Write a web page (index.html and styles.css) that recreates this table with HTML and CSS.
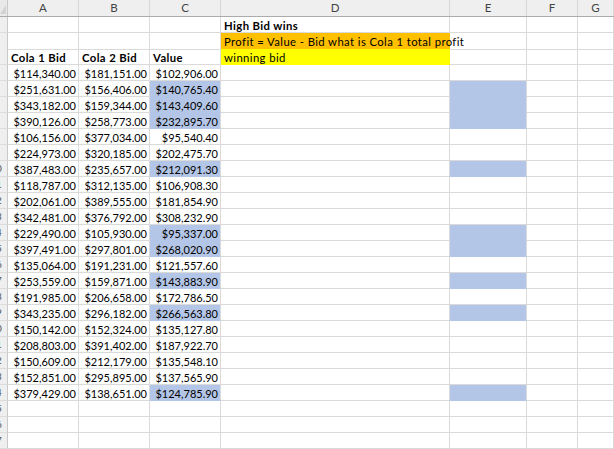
FILE: index.html
```html
<!DOCTYPE html>
<html>
<head>
<meta charset="utf-8">
<link rel="stylesheet" href="styles.css">
</head>
<body>
<div class="sheet">
  <div class="row head">
    <div class="corner"><i></i></div>
    <div class="ch">A</div><div class="ch">B</div><div class="ch">C</div><div class="ch">D</div><div class="ch">E</div><div class="ch">F</div><div class="ch">G</div>
  </div>
  <div class="row"><div class="rh"><span>1</span></div><div class="c"></div><div class="c"></div><div class="c"></div><div class="c t b">High Bid wins</div><div class="c"></div><div class="c"></div><div class="c"></div></div>
  <div class="row"><div class="rh"><span>2</span></div><div class="c"></div><div class="c"></div><div class="c"></div><div class="c t or ov">Profit = Value - Bid what is Cola 1 total profit</div><div class="c"></div><div class="c"></div><div class="c"></div></div>
  <div class="row"><div class="rh"><span>3</span></div><div class="c t b">Cola 1 Bid</div><div class="c t b">Cola 2 Bid</div><div class="c t b">Value</div><div class="c t ye">winning bid</div><div class="c"></div><div class="c"></div><div class="c"></div></div>
  <div class="row"><div class="rh"><span>4</span></div><div class="c n">$114,340.00</div><div class="c n">$181,151.00</div><div class="c n">$102,906.00</div><div class="c"></div><div class="c"></div><div class="c"></div><div class="c"></div></div>
  <div class="row"><div class="rh"><span>5</span></div><div class="c n">$251,631.00</div><div class="c n">$156,406.00</div><div class="c n hl">$140,765.40</div><div class="c"></div><div class="c hl"></div><div class="c"></div><div class="c"></div></div>
  <div class="row"><div class="rh"><span>6</span></div><div class="c n">$343,182.00</div><div class="c n">$159,344.00</div><div class="c n hl">$143,409.60</div><div class="c"></div><div class="c hl"></div><div class="c"></div><div class="c"></div></div>
  <div class="row"><div class="rh"><span>7</span></div><div class="c n">$390,126.00</div><div class="c n">$258,773.00</div><div class="c n hl">$232,895.70</div><div class="c"></div><div class="c hl"></div><div class="c"></div><div class="c"></div></div>
  <div class="row"><div class="rh"><span>8</span></div><div class="c n">$106,156.00</div><div class="c n">$377,034.00</div><div class="c n">$95,540.40</div><div class="c"></div><div class="c"></div><div class="c"></div><div class="c"></div></div>
  <div class="row"><div class="rh"><span>9</span></div><div class="c n">$224,973.00</div><div class="c n">$320,185.00</div><div class="c n">$202,475.70</div><div class="c"></div><div class="c"></div><div class="c"></div><div class="c"></div></div>
  <div class="row"><div class="rh"><span>10</span></div><div class="c n">$387,483.00</div><div class="c n">$235,657.00</div><div class="c n hl">$212,091.30</div><div class="c"></div><div class="c hl"></div><div class="c"></div><div class="c"></div></div>
  <div class="row"><div class="rh"><span>11</span></div><div class="c n">$118,787.00</div><div class="c n">$312,135.00</div><div class="c n">$106,908.30</div><div class="c"></div><div class="c"></div><div class="c"></div><div class="c"></div></div>
  <div class="row"><div class="rh"><span>12</span></div><div class="c n">$202,061.00</div><div class="c n">$389,555.00</div><div class="c n">$181,854.90</div><div class="c"></div><div class="c"></div><div class="c"></div><div class="c"></div></div>
  <div class="row"><div class="rh"><span>13</span></div><div class="c n">$342,481.00</div><div class="c n">$376,792.00</div><div class="c n">$308,232.90</div><div class="c"></div><div class="c"></div><div class="c"></div><div class="c"></div></div>
  <div class="row"><div class="rh"><span>14</span></div><div class="c n">$229,490.00</div><div class="c n">$105,930.00</div><div class="c n hl">$95,337.00</div><div class="c"></div><div class="c hl"></div><div class="c"></div><div class="c"></div></div>
  <div class="row"><div class="rh"><span>15</span></div><div class="c n">$397,491.00</div><div class="c n">$297,801.00</div><div class="c n hl">$268,020.90</div><div class="c"></div><div class="c hl"></div><div class="c"></div><div class="c"></div></div>
  <div class="row"><div class="rh"><span>16</span></div><div class="c n">$135,064.00</div><div class="c n">$191,231.00</div><div class="c n">$121,557.60</div><div class="c"></div><div class="c"></div><div class="c"></div><div class="c"></div></div>
  <div class="row"><div class="rh"><span>17</span></div><div class="c n">$253,559.00</div><div class="c n">$159,871.00</div><div class="c n hl">$143,883.90</div><div class="c"></div><div class="c hl"></div><div class="c"></div><div class="c"></div></div>
  <div class="row"><div class="rh"><span>18</span></div><div class="c n">$191,985.00</div><div class="c n">$206,658.00</div><div class="c n">$172,786.50</div><div class="c"></div><div class="c"></div><div class="c"></div><div class="c"></div></div>
  <div class="row"><div class="rh"><span>19</span></div><div class="c n">$343,235.00</div><div class="c n">$296,182.00</div><div class="c n hl">$266,563.80</div><div class="c"></div><div class="c hl"></div><div class="c"></div><div class="c"></div></div>
  <div class="row"><div class="rh"><span>20</span></div><div class="c n">$150,142.00</div><div class="c n">$152,324.00</div><div class="c n">$135,127.80</div><div class="c"></div><div class="c"></div><div class="c"></div><div class="c"></div></div>
  <div class="row"><div class="rh"><span>21</span></div><div class="c n">$208,803.00</div><div class="c n">$391,402.00</div><div class="c n">$187,922.70</div><div class="c"></div><div class="c"></div><div class="c"></div><div class="c"></div></div>
  <div class="row"><div class="rh"><span>22</span></div><div class="c n">$150,609.00</div><div class="c n">$212,179.00</div><div class="c n">$135,548.10</div><div class="c"></div><div class="c"></div><div class="c"></div><div class="c"></div></div>
  <div class="row"><div class="rh"><span>23</span></div><div class="c n">$152,851.00</div><div class="c n">$295,895.00</div><div class="c n">$137,565.90</div><div class="c"></div><div class="c"></div><div class="c"></div><div class="c"></div></div>
  <div class="row"><div class="rh"><span>24</span></div><div class="c n">$379,429.00</div><div class="c n">$138,651.00</div><div class="c n hl">$124,785.90</div><div class="c"></div><div class="c hl"></div><div class="c"></div><div class="c"></div></div>
  <div class="row"><div class="rh"><span>25</span></div><div class="c"></div><div class="c"></div><div class="c"></div><div class="c"></div><div class="c"></div><div class="c"></div><div class="c"></div></div>
  <div class="row"><div class="rh"><span>26</span></div><div class="c"></div><div class="c"></div><div class="c"></div><div class="c"></div><div class="c"></div><div class="c"></div><div class="c"></div></div>
  <div class="row"><div class="rh"><span>27</span></div><div class="c"></div><div class="c"></div><div class="c"></div><div class="c"></div><div class="c"></div><div class="c"></div><div class="c"></div></div>
  <div class="row"><div class="rh"><span>28</span></div><div class="c"></div><div class="c"></div><div class="c"></div><div class="c"></div><div class="c"></div><div class="c"></div><div class="c"></div></div>
</div>
</body>
</html>
```

FILE: styles.css
```css
* { box-sizing: border-box; }

html, body {
  margin: 0;
  padding: 0;
  background: #ffffff;
}

body {
  font-family: Lato, "Liberation Sans", sans-serif;
  font-size: 11px;
  color: #000000;
  overflow: hidden;
}

.sheet {
  width: 614px;
  height: 449px;
  overflow: hidden;
}

.row {
  display: grid;
  grid-template-columns: 8px 71px 71px 71px 229px 77px 51px 1fr;
  height: 16px;
}

.row.head {
  height: 17px;
  background: #efefef;
  border-bottom: 1px solid #ababab;
}

.corner {
  position: relative;
  border-right: 1px solid #c9c9c9;
  background: #e9e9e9;
}

.corner i {
  position: absolute;
  left: 0;
  bottom: 2px;
  width: 0;
  height: 0;
  border-left: 6px solid transparent;
  border-bottom: 9px solid #d2d2d2;
}

.ch {
  border-right: 1px solid #d7d7d7;
  text-align: center;
  line-height: 16px;
  color: #444444;
  font-size: 11.5px;
}

.rh {
  background: #efefef;
  border-right: 1px solid #c9c9c9;
  border-bottom: 1px solid #dcdcdc;
  overflow: hidden;
}

.rh span {
  display: block;
  width: 22px;
  margin-left: -15px;
  text-align: center;
  line-height: 15px;
  color: #555555;
  font-size: 10px;
}

.c {
  border-right: 1px solid #dadada;
  border-bottom: 1px solid #dadada;
  padding: 1px 2px 0 3px;
  line-height: 15px;
  white-space: nowrap;
  overflow: hidden;
}

.t {
  font-size: 11.3px;
  letter-spacing: 0.4px;
}

.ov { overflow: visible; }

.n { text-align: right; }

.b { font-weight: bold; }

.hl {
  background: #b4c6e7;
  border-bottom-color: #b4c6e7;
}

.or {
  background: #ffc000;
  border-right-color: #ffc000;
  border-bottom-color: #ffc000;
}

.ye {
  background: #ffff00;
  border-right-color: #ffff00;
  border-bottom-color: #ffff00;
}
```
